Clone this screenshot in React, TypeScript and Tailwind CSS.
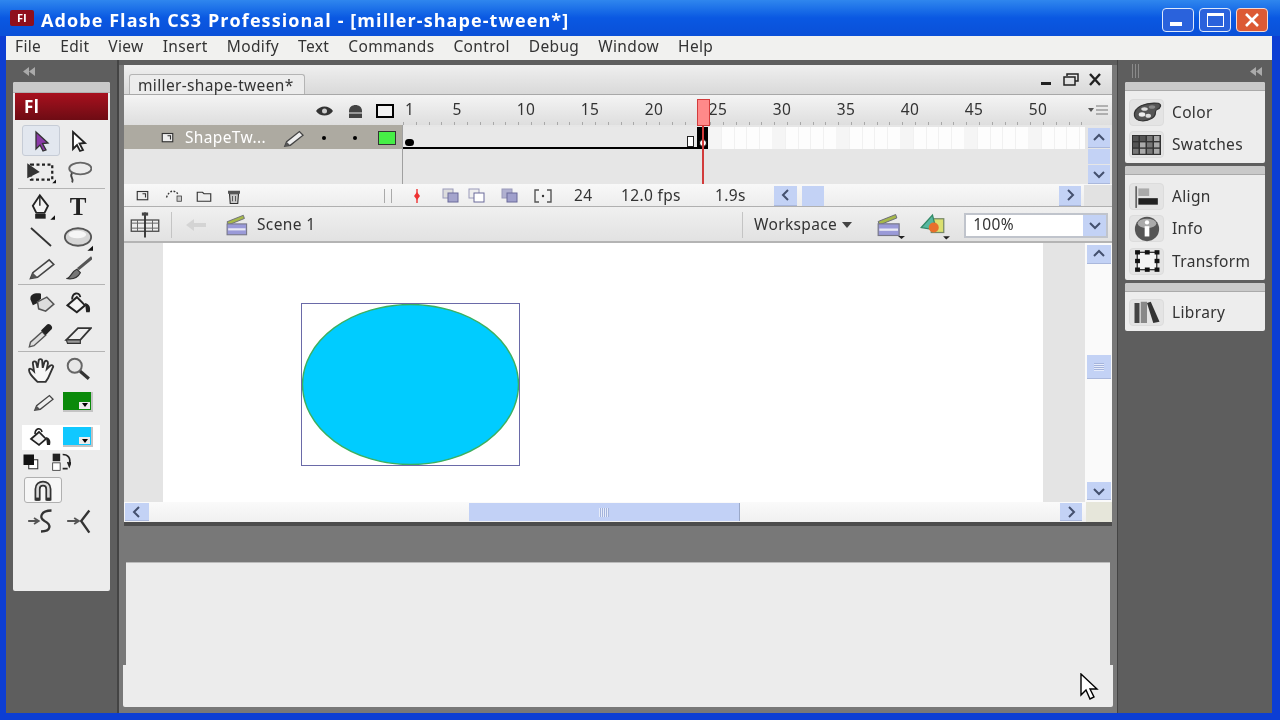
import type { ReactNode } from 'react';

const menus = ['File', 'Edit', 'View', 'Insert', 'Modify', 'Text', 'Commands', 'Control', 'Debug', 'Window', 'Help'];
const frameLabels = ['10', '15', '20', '25', '30', '35', '40', '45', '50'];

function Ico({ size = 24, children, className = '' }: { size?: number; children: ReactNode; className?: string }) {
  return (
    <svg width={size} height={size} viewBox="0 0 24 24" className={className}>
      {children}
    </svg>
  );
}

const ArrowTool = () => (
  <Ico><path d="M7 3 L19 14 L13.5 14.5 L17 21 L14 22 L11 16 L7 20 Z" fill="#8a3aa8" stroke="#333" strokeWidth="1.3" /></Ico>
);
const SubTool = () => (
  <Ico><path d="M7 3 L19 14 L13.5 14.5 L17 21 L14 22 L11 16 L7 20 Z" fill="#fff" stroke="#222" strokeWidth="1.8" /></Ico>
);
const FreeTransform = () => (
  <Ico size={30}>
    <rect x="4" y="6" width="17" height="12" fill="none" stroke="#222" strokeWidth="1.8" strokeDasharray="2.4 2" />
    <path d="M1 5 L11 12 L1 17 Z" fill="#333" />
    <path d="M21 21 L24 21 L24 18 Z" fill="#111" />
  </Ico>
);
const Lasso = () => (
  <Ico size={28}>
    <ellipse cx="14" cy="9" rx="9.5" ry="5" fill="none" stroke="#666" strokeWidth="1.6" />
    <path d="M7 13 C4 16 9 17 7 21" fill="none" stroke="#444" strokeWidth="1.6" />
  </Ico>
);
const PenTool = () => (
  <Ico size={28}>
    <path d="M11 2 L18 11 L15 17 L8 17 L5 11 Z" fill="#f4f4f4" stroke="#222" strokeWidth="1.6" />
    <path d="M11 3 V11" stroke="#222" strokeWidth="1.2" />
    <rect x="7" y="18" width="9" height="4" fill="#222" />
    <path d="M20 23 L24 23 L24 19 Z" fill="#111" />
  </Ico>
);
const LineTool = () => (
  <Ico><path d="M2 3 L22 21" stroke="#333" strokeWidth="1.8" /></Ico>
);
const OvalTool = () => (
  <Ico size={30}>
    <ellipse cx="12" cy="12" rx="10.5" ry="7" fill="#d6d6d6" stroke="#555" strokeWidth="1.5" />
    <ellipse cx="11.5" cy="10" rx="7" ry="3" fill="#f6f6f6" />
    <path d="M19.5 23 L24 23 L24 19 Z" fill="#111" />
  </Ico>
);
const Pencil = ({ size = 28 }: { size?: number }) => (
  <Ico size={size}>
    <path d="M3 21 L5 16 L19 5 L23 9 L9 20 Z" fill="#eee" stroke="#444" strokeWidth="1.4" />
    <path d="M3 21 L5 16 L9 20 Z" fill="#555" />
  </Ico>
);
const Brush = () => (
  <Ico size={28}>
    <path d="M12 13 L24 3" stroke="#555" strokeWidth="2.6" />
    <path d="M2 21 C6 21 6 15 11 13 L14 16 C12 20 8 22 2 21 Z" fill="#777" stroke="#333" strokeWidth="1" />
  </Ico>
);
const InkBottle = () => (
  <Ico size={28}>
    <path d="M3 9 C2 4 8 3 12 4 L12 8 L9 12 L5 14 Z" fill="#222" />
    <path d="M9 11 L17 7 L23 13 L16 19 L10 17 Z" fill="#ddd" stroke="#555" strokeWidth="1.3" />
  </Ico>
);
const PaintBucket = ({ size = 28 }: { size?: number }) => (
  <Ico size={size}>
    <path d="M3 14 L11 7 L18 14 L11 20 Z" fill="#f4f4f4" stroke="#222" strokeWidth="1.7" />
    <path d="M7 9 C7 3 13 2 14 7" fill="none" stroke="#222" strokeWidth="1.6" />
    <path d="M18 12 C22 13 23 16 22 20 L19 20 Z" fill="#222" />
  </Ico>
);
const Eyedropper = () => (
  <Ico size={28}>
    <path d="M2 23 L3 19 L13 10 L16 13 L6 22 Z" fill="#ddd" stroke="#555" strokeWidth="1.2" />
    <path d="M12 9 L17 4 C19 2 23 6 21 8 L16 13 Z" fill="#222" />
  </Ico>
);
const Eraser = () => (
  <Ico size={28}>
    <path d="M2 17 L12 7 L23 7 L14 17 Z" fill="#eee" stroke="#333" strokeWidth="1.5" />
    <path d="M2 17 L14 17 L14 20 L3 20 Z" fill="#999" stroke="#333" strokeWidth="1" />
  </Ico>
);
const Hand = () => (
  <Ico size={28}>
    <path d="M7 21 C4 18 1 14 2 12 C3 11 5 13 6 14 L5 7 C5 5 8 5 8 7 L9 11 L10 5 C10 3 13 3 13 5 L13.5 11 L15 6 C16 4 18 5 18 7 L17 12 L20 9 C22 8 23 10 22 11 L18 20 L16 23 L9 23 Z" fill="#f6f6f6" stroke="#333" strokeWidth="1.6" />
  </Ico>
);
const Zoom = () => (
  <Ico size={26}>
    <circle cx="9" cy="9" r="6.5" fill="#e8e8e8" stroke="#666" strokeWidth="1.8" />
    <path d="M14 14 L22 21" stroke="#333" strokeWidth="3" />
  </Ico>
);
const DefaultColors = () => (
  <Ico size={18}>
    <rect x="9" y="9" width="12" height="12" fill="#fff" stroke="#333" strokeWidth="1.4" />
    <rect x="2" y="2" width="14" height="14" fill="#111" />
  </Ico>
);
const SwapColors = () => (
  <Ico size={20}>
    <rect x="2" y="2" width="9" height="9" fill="#222" />
    <rect x="2" y="13" width="9" height="9" fill="#fff" stroke="#333" />
    <path d="M14 3 C21 3 24 8 22 15 M20 12 L22 17 L24 12 M14 20 L20 20" fill="none" stroke="#222" strokeWidth="2" />
  </Ico>
);
const Magnet = () => (
  <Ico size={26}>
    <path d="M5 21 V11 C5 2 19 2 19 11 V21 H15 V11 C15 7 9 7 9 11 V21 Z" fill="#ddd" stroke="#333" strokeWidth="1.6" />
    <rect x="5" y="19" width="4" height="3" fill="#333" />
    <rect x="15" y="19" width="4" height="3" fill="#333" />
  </Ico>
);
const Smooth = () => (
  <Ico size={28}>
    <path d="M1 12 H9 M6 9.5 L10 12 L6 14.5" fill="none" stroke="#555" strokeWidth="1.6" />
    <path d="M21 3 C12 3 10 9 15 12 C21 15 21 21 12 21" fill="none" stroke="#333" strokeWidth="2" />
  </Ico>
);
const Straighten = () => (
  <Ico size={28}>
    <path d="M1 12 H10 M7 9.5 L11 12 L7 14.5" fill="none" stroke="#555" strokeWidth="1.6" />
    <path d="M20 3 L13 12 L20 22" fill="none" stroke="#333" strokeWidth="2" />
  </Ico>
);

const Clapper = ({ size = 26, drop }: { size?: number; drop?: boolean }) => (
  <Ico size={size}>
    <path d="M1 9 L16 3 L17 6 L2 12 Z" fill="#a6b84a" stroke="#667" strokeWidth="0.8" />
    <rect x="1" y="11" width="18" height="10" fill="#9a9ad8" stroke="#778" />
    <rect x="2" y="15" width="16" height="2" fill="#e8e8f4" />
    {drop && <path d="M18 21.5 H24 L21 24 Z" fill="#222" />}
  </Ico>
);
const EditScene = () => (
  <Ico size={30}>
    <rect x="1" y="8" width="22" height="9" fill="#eee" stroke="#444" strokeWidth="1" />
    <path d="M1 10.5 H23 M1 14.5 H23 M6 8 V17 M18 8 V17" stroke="#666" strokeWidth="0.8" />
    <path d="M12 2 V22" stroke="#333" strokeWidth="1.5" />
    <rect x="9.5" y="2" width="5" height="2.5" fill="#444" />
  </Ico>
);
const Shapes = () => (
  <Ico size={30}>
    <rect x="9" y="7" width="10" height="11" fill="#dbe070" stroke="#786" />
    <path d="M1 14 L10 4 L13 16 Z" fill="#55b8a0" stroke="#386" />
    <circle cx="11" cy="14" r="4" fill="#e8702c" />
    <path d="M18.5 21 H24 L21 23.5 Z" fill="#222" />
  </Ico>
);
const Palette = () => (
  <Ico size={30}>
    <path d="M2 15 C1 8 11 4 21 5 C24 6 23 9 20 10 C17 11 21 14 16 17 C11 20 3 20 2 15 Z" fill="#555" stroke="#333" />
    <ellipse cx="8" cy="14" rx="2.6" ry="1.8" fill="#eee" />
    <ellipse cx="13" cy="15" rx="2.2" ry="1.6" fill="#ddd" />
    <ellipse cx="10" cy="9.5" rx="2.6" ry="1.4" fill="#ddd" />
    <ellipse cx="16" cy="8" rx="2.6" ry="1.4" fill="#888" />
  </Ico>
);
const SwatchGrid = () => (
  <svg width="29" height="20" viewBox="0 0 29 20">
    <rect width="29" height="20" fill="#333" />
    {[0, 1, 2, 3].map((c) =>
      [0, 1, 2].map((r) => (
        <rect key={`${c}-${r}`} x={1 + c * 7} y={1 + r * 6.4} width="5.5" height="5" fill={c + r < 2 ? '#555' : c % 2 ? '#aaa' : '#777'} />
      )),
    )}
  </svg>
);
const AlignIco = () => (
  <Ico size={26}>
    <path d="M2 3 V23" stroke="#666" strokeWidth="1.6" />
    <rect x="4" y="5" width="10" height="7" fill="#aaa" />
    <rect x="4" y="14" width="18" height="6" fill="#222" />
  </Ico>
);
const InfoIco = () => (
  <svg width="28" height="28" viewBox="0 0 30 30">
    <circle cx="15" cy="15" r="13" fill="#555" />
    <ellipse cx="15" cy="9" rx="10" ry="5" fill="#aaa" />
    <circle cx="15" cy="8" r="2.3" fill="#fff" />
    <rect x="12.5" y="12" width="5" height="11" fill="#fff" />
  </svg>
);
const TransformIco = () => (
  <Ico size={26}>
    <rect x="3" y="4" width="18" height="16" fill="#f4f4f4" stroke="#333" strokeWidth="1.2" />
    {[[1, 2], [10, 2], [19, 2], [1, 10], [19, 10], [1, 18], [10, 18], [19, 18]].map(([x, y]) => (
      <rect key={`${x}-${y}`} x={x} y={y} width="4.5" height="4" fill="#111" />
    ))}
  </Ico>
);
const LibraryIco = () => (
  <Ico size={30}>
    <rect x="2" y="4" width="4" height="16" fill="#444" />
    <rect x="7" y="3" width="5" height="17" fill="#888" />
    <path d="M12 4 L15 3 L22 19 L17 20 Z" fill="#333" />
  </Ico>
);

function ScrollBtn({ dir, className = '' }: { dir: 'up' | 'down' | 'left' | 'right'; className?: string }) {
  const d = { up: 'M3 10 L8 5 L13 10', down: 'M3 6 L8 11 L13 6', left: 'M10 3 L5 8 L10 13', right: 'M6 3 L11 8 L6 13' }[dir];
  return (
    <div className={`flex items-center justify-center bg-[#c3d2f5] border-b border-[#aab8dc] ${className}`}>
      <svg width="16" height="16" viewBox="0 0 16 16">
        <path d={d} fill="none" stroke="#44506e" strokeWidth="2" />
      </svg>
    </div>
  );
}

function Tool({ children, active }: { children: ReactNode; active?: boolean }) {
  return (
    <div className={`flex items-center justify-center h-[31px] ${active ? 'bg-[#e2e7ef] border border-[#c6ccd6] rounded-[3px]' : ''}`}>
      {children}
    </div>
  );
}

function ToolSep() {
  return <div className="h-px bg-[#b4b4b4] mx-[5px] my-[1px]" />;
}

function Swatch({ color }: { color: string }) {
  return (
    <div className="relative w-[30px] h-[20px] border-r-2 border-b-2 border-[#c4c4c4]">
      <div className="w-full h-full" style={{ background: color }} />
      <div className="absolute right-[1px] bottom-[1px] w-[11px] h-[7px] bg-[#ececec] flex items-center justify-center">
        <div className="w-0 h-0 border-x-[3px] border-x-transparent border-t-[4px] border-t-black" />
      </div>
    </div>
  );
}

function PanelGroup({ items }: { items: { icon: ReactNode; label: string }[] }) {
  return (
    <div className="mx-[7px] bg-[#ededed] rounded-[2px] mb-[3px]">
      <div className="h-[9px] bg-[#c9c9c9] border-b border-[#aaa] rounded-t-[2px]" />
      <div className="flex flex-col pt-[5px] pb-[2px] px-[4px]">
        {items.map((it) => (
          <div key={it.label} className="flex items-center h-[32.5px]">
            <div className="w-[35px] h-[27px] flex items-center justify-center bg-[#e4e4e4] rounded-[4px] border border-[#dcdcdc]">{it.icon}</div>
            <span className="ml-[8px] text-[#333]">{it.label}</span>
          </div>
        ))}
      </div>
    </div>
  );
}

function Collapse({ className = '' }: { className?: string }) {
  return (
    <svg width="14" height="9" viewBox="0 0 14 9" className={className}>
      <path d="M7 0 V9 L1 4.5 Z M13 0 V9 L7 4.5 Z" fill="#aaa" />
    </svg>
  );
}

function SmallLayerIco({ kind }: { kind: number }) {
  return (
    <Ico size={18}>
      {kind === 0 && (
        <>
          <rect x="3" y="6" width="14" height="11" fill="#eee" stroke="#333" strokeWidth="1.5" />
          <path d="M10 9 H14 V14" fill="none" stroke="#333" strokeWidth="1.5" />
        </>
      )}
      {kind === 1 && (
        <>
          <path d="M2 14 C5 5 12 3 17 9" fill="none" stroke="#333" strokeWidth="1.8" strokeDasharray="2.5 2" />
          <rect x="16" y="12" width="6" height="7" fill="#ccc" stroke="#333" />
        </>
      )}
      {kind === 2 && <path d="M3 7 H10 L12 9 H21 V19 H3 Z" fill="#eee" stroke="#333" strokeWidth="1.5" />}
      {kind === 3 && (
        <>
          <path d="M6 9 H18 L17 22 H7 Z" fill="#ccc" stroke="#333" strokeWidth="1.5" />
          <rect x="4" y="5" width="16" height="4" fill="#555" />
          <path d="M10 12 V19 M14 12 V19" stroke="#333" />
        </>
      )}
    </Ico>
  );
}

function Onion({ a, b }: { a: string; b: string }) {
  return (
    <svg width="18" height="16" viewBox="0 0 18 16">
      <rect x="1" y="1" width="10" height="9" fill={a} stroke="#9a9aba" />
      <rect x="6" y="5" width="10" height="9" fill={b} stroke="#6a6a9a" />
    </svg>
  );
}

export default function App() {
  return (
    <div className="relative w-[1280px] h-[720px] overflow-hidden flex flex-col bg-[#0c3ed4] font-['Noto_Sans',sans-serif] text-[15.5px] tracking-[0.35px] blur-[0.5px]">
      {/* title bar */}
      <div className="h-9 shrink-0 flex items-center pt-[4px] pl-[10px] pr-[12px] bg-gradient-to-b from-[#2f86ee] via-[#0a58e2] to-[#0a50d8]">
        <div className="w-[24px] h-[16px] mb-[5px] bg-[#8f0f1c] rounded-[2px] text-white text-[11px] font-bold flex items-center justify-center leading-none">Fl</div>
        <span className="ml-[7px] mt-[1px] text-white font-bold text-[18px] tracking-[1.08px] font-['Open_Sans',sans-serif] whitespace-nowrap">Adobe Flash CS3 Professional - [miller-shape-tween*]</span>
        <div className="ml-auto flex gap-[5px]">
          <div className="w-[32px] h-[24px] rounded-[4px] border border-[#dfe9fb] bg-[#2a62dc] flex items-end pl-[7px] pb-[5px]">
            <div className="w-[12px] h-[4px] bg-white" />
          </div>
          <div className="w-[32px] h-[24px] rounded-[4px] border border-[#dfe9fb] bg-[#2a62dc] flex items-center justify-center">
            <div className="w-[17px] h-[14px] border border-white border-t-[3px]" />
          </div>
          <div className="w-[32px] h-[24px] rounded-[4px] border border-[#f4d8d0] bg-[#dc5a34] flex items-center justify-center">
            <svg width="16" height="14" viewBox="0 0 16 14">
              <path d="M2 1 L14 13 M14 1 L2 13" stroke="#fff" strokeWidth="2.6" />
            </svg>
          </div>
        </div>
      </div>

      {/* menu */}
      <div className="h-6 shrink-0 ml-[6px] mr-[8px] bg-[#f1f1ef] flex items-center pb-[3px] pl-[9px] gap-[19px] text-[#333]">
        {menus.map((m) => (
          <span key={m}>{m}</span>
        ))}
      </div>

      <div className="flex-1 flex ml-[6px] mr-[8px] bg-[#5e5e5e] min-h-0">
        {/* tools */}
        <div className="w-[111px] shrink-0 pl-[7px]">
          <div className="h-[22px] flex items-center pl-[9px]">
            <Collapse />
          </div>
          <div className="w-[97px] h-[509px] bg-[#ececec] rounded-[2px]">
            <div className="h-[11px] bg-[#c9c9c9] border-b border-[#b0b0b0] rounded-t-[2px]" />
            <div className="mx-[2px] h-[27px] bg-gradient-to-b from-[#a8101e] to-[#6e0c14] text-white font-bold text-[17px] pl-[9px] flex items-center">Fl</div>
            <div className="grid grid-cols-2 pl-[9px] pr-[11px] pt-[5px] w-[95px]">
              <Tool active><ArrowTool /></Tool>
              <Tool><SubTool /></Tool>
              <Tool><FreeTransform /></Tool>
              <Tool><Lasso /></Tool>
            </div>
            <ToolSep />
            <div className="grid grid-cols-2 pl-[9px] pr-[11px] pt-[1px] w-[95px] auto-rows-[30.5px]">
              <Tool><PenTool /></Tool>
              <Tool><span className="font-['Liberation_Serif',serif] font-bold text-[25px] text-[#222]">T</span></Tool>
              <Tool><LineTool /></Tool>
              <Tool><OvalTool /></Tool>
              <Tool><Pencil /></Tool>
              <Tool><Brush /></Tool>
            </div>
            <ToolSep />
            <div className="grid grid-cols-2 pl-[9px] pr-[11px] pt-[2px] w-[95px]">
              <Tool><InkBottle /></Tool>
              <Tool><PaintBucket /></Tool>
              <Tool><Eyedropper /></Tool>
              <Tool><Eraser /></Tool>
            </div>
            <ToolSep />
            <div className="grid grid-cols-2 pl-[9px] pr-[11px] pt-[1px] w-[95px]">
              <Tool><Hand /></Tool>
              <Tool><Zoom /></Tool>
            </div>
            <div className="flex items-center h-[34px] pl-[19px] gap-[9px]">
              <Pencil size={22} />
              <Swatch color="#0a8a0a" />
            </div>
            <div className="flex items-center h-[25px] mt-[6px] ml-[9px] w-[78px] bg-white pl-[6px] gap-[11px]">
              <PaintBucket size={24} />
              <Swatch color="#10c8ff" />
            </div>
            <div className="flex items-center h-[25px] pl-[9px] gap-[11px]">
              <DefaultColors />
              <SwapColors />
            </div>
            <div className="ml-[11px] mt-[2px] w-[38px] h-[26px] border border-[#b0b0b0] bg-[#f6f6f6] rounded-[3px] flex items-center justify-center">
              <Magnet />
            </div>
            <div className="flex items-center h-[32px] mt-[2px] pl-[14px] gap-[11px]">
              <Smooth />
              <Straighten />
            </div>
          </div>
        </div>

        {/* center */}
        <div className="w-[1001px] shrink-0 flex flex-col border-l-2 border-r border-[#444] bg-[#787878]">
          <div className="h-[5px] shrink-0 bg-[#5e5e5e]" />
          <div className="h-[457px] shrink-0 mx-[5px] bg-[#e6e6e6] flex flex-col relative rounded-t-[3px]">
            {/* tab row */}
            <div className="h-[30px] shrink-0 bg-gradient-to-b from-[#efefef] to-[#d9d9d9] border-b border-[#a8a8a8] flex items-end pl-[5px] pr-[10px]">
              <div className="w-[176px] h-[20px] bg-[#ececec] border border-b-0 border-[#b4b4b4] rounded-t-[3px] leading-[20px] text-[#333] pl-[8px]">miller-shape-tween*</div>
              <div className="ml-auto h-full flex items-center gap-[9px] text-[#222]">
                <div className="w-[10px] h-[3px] bg-[#222] mt-[8px]" />
                <svg width="16" height="13" viewBox="0 0 16 13" className="ml-[3px]"><path d="M4 3 V1 H15 V8 H12 M1 4 H12 V12 H1 Z" fill="none" stroke="#222" strokeWidth="1.5" /></svg>
                <svg width="14" height="13" viewBox="0 0 14 13"><path d="M2 1 L12 12 M12 1 L2 12" stroke="#222" strokeWidth="2.4" /></svg>
              </div>
            </div>
            {/* timeline */}
            <div className="flex h-[30px] shrink-0 bg-gradient-to-b from-[#f4f4f4] to-[#dedede]">
              <div className="w-[278px] shrink-0 flex items-center justify-end pt-[1px] pr-[8px] gap-[13px]">
                <svg width="19" height="12" viewBox="0 0 19 12" className="mr-[1px]"><path d="M1 6 C5 0 14 0 18 6 C14 12 5 12 1 6 Z" fill="#333" /><circle cx="9.5" cy="6" r="2.5" fill="#ccc" /></svg>
                <svg width="15" height="14" viewBox="0 0 15 14"><path d="M1 14 V7 C1 -1 14 -1 14 7 V14 Z" fill="#444" /><rect x="1" y="8" width="13" height="2" fill="#999" /></svg>
                <div className="w-[18px] h-[14px] border-2 border-black bg-[#f2f2f2]" />
              </div>
              <div className="flex-1 flex flex-col min-w-0">
                <div className="flex-1 flex text-[#333] items-center pt-[3px]">
                  <span className="w-[15px] text-center">1</span>
                  <span className="w-[64px] text-center ml-[8px]">5</span>
                  <div className="w-[5px] shrink-0" />
                  {frameLabels.map((l) => (
                    <span key={l} className="w-[64px] shrink-0 text-center">{l}</span>
                  ))}
                  <svg width="22" height="12" viewBox="0 0 22 12" className="ml-auto mr-[3px]"><path d="M1 4 H7 L4 8 Z" fill="#555" /><path d="M9 2 H21 M9 6 H21 M9 10 H21" stroke="#777" /></svg>
                </div>
                <div className="h-[3px] w-[683px] ml-[1px] bg-[repeating-linear-gradient(90deg,#a8a8a8_0,#a8a8a8_1px,transparent_1px,transparent_12.8px)]" />
              </div>
            </div>
            <div className="flex h-[59px] shrink-0">
              <div className="w-[279px] shrink-0 border-r border-[#a0a0a0]">
                <div className="h-[24px] pt-[2px] bg-[#adaaa1] flex items-center pl-[36px]">
                  <SmallLayerIco kind={0} />
                  <span className="ml-[7px] text-white w-[97px] whitespace-nowrap">ShapeTw...</span>
                  <Pencil size={22} />
                  <div className="w-[4px] h-[4px] rounded-full bg-black ml-[18px]" />
                  <div className="w-[4px] h-[4px] rounded-full bg-black ml-[27px]" />
                  <div className="w-[18px] h-[14px] bg-[#46ee46] border border-[#333] ml-[21px]" />
                </div>
              </div>
              <div className="w-[682px] shrink-0">
                <div className="h-[24px] pt-[2px] flex">
                  <div className="w-[294px] bg-[#e8e8e8] border-b-2 border-black flex items-end justify-between pl-[2px] pr-[3px]">
                    <div className="w-[9px] h-[7px] rounded-full bg-black mb-[1px]" />
                    <div className="w-[7px] h-[11px] border border-[#222] bg-white" />
                  </div>
                  <div className="w-[11px] bg-black flex items-end justify-center pb-[2px]">
                    <div className="w-[8px] h-[8px] rounded-full bg-white border border-black" />
                  </div>
                  <div className="flex-1 bg-[repeating-linear-gradient(90deg,#f5f5f5_0,#f5f5f5_12.8px,transparent_12.8px,transparent_64px),repeating-linear-gradient(90deg,#f1f1f1_0,#f1f1f1_1px,#fdfdfd_1px,#fdfdfd_12.8px)]" />
                </div>
              </div>
              <div className="flex-1 flex flex-col pt-[3px] items-center">
                <ScrollBtn dir="up" className="w-[22px] h-[20px]" />
                <div className="w-[22px] h-[15px] mt-[1px] bg-[#c3d2f5]" />
                <ScrollBtn dir="down" className="w-[22px] h-[19px] mt-[1px]" />
              </div>
            </div>
            <div className="h-[23px] shrink-0 pt-[1px] bg-gradient-to-b from-[#f8f8f8] to-[#ededed] border-b border-[#b0b0b0] flex items-center text-[#333]">
              <div className="w-[278px] shrink-0 flex items-center pl-[11px] gap-[12px]">
                <SmallLayerIco kind={0} />
                <SmallLayerIco kind={1} />
                <SmallLayerIco kind={2} />
                <SmallLayerIco kind={3} />
                <div className="ml-auto mr-[10px] w-[8px] h-[14px] border-x border-[#aaa]" />
              </div>
              <svg width="10" height="16" viewBox="0 0 10 16" className="ml-[10px]"><path d="M5 1 V15" stroke="#e33" strokeWidth="1.4" /><path d="M5 4 L8 8 L5 12 L2 8 Z" fill="#e33" /></svg>
              <div className="ml-[20px] flex gap-[8px]">
                <Onion a="#ddd" b="#a4a4cc" />
                <Onion a="#eee" b="#fff" />
              </div>
              <div className="ml-[15px]"><Onion a="#b0b0d0" b="#a0a0cc" /></div>
              <svg width="18" height="14" viewBox="0 0 18 14" className="ml-[15px]"><path d="M5 1 H1 V13 H5 M13 1 H17 V13 H13" fill="none" stroke="#555" strokeWidth="1.4" /><circle cx="9" cy="7" r="1.2" fill="#333" /></svg>
              <span className="ml-[22px] w-[18px]">24</span>
              <span className="ml-[29px] w-[64px] whitespace-nowrap">12.0 fps</span>
              <span className="ml-[30px] w-[33px]">1.9s</span>
              <ScrollBtn dir="left" className="ml-[26px] w-[23px] h-[20px]" />
              <div className="ml-[5px] w-[22px] h-[20px] bg-[#c3d2f5]" />
              <ScrollBtn dir="right" className="ml-[235px] w-[22px] h-[20px]" />
              <div className="ml-[3px] flex-1 h-full bg-[#e2e2e2]" />
            </div>
            {/* edit bar */}
            <div className="h-[36px] shrink-0 pt-[2px] bg-gradient-to-b from-[#f0f0f0] to-[#e2e2e2] border-b-2 border-[#b4b4b4] flex items-center text-[#333]">
              <div className="ml-[6px]"><EditScene /></div>
              <div className="ml-[11px] w-px h-[26px] bg-[#c4c4c4]" />
              <svg width="22" height="14" viewBox="0 0 22 14" className="ml-[13px]"><path d="M1 7 L9 1 V5 H21 V9 H9 V13 Z" fill="#d4d4d4" /></svg>
              <div className="ml-[19px]"><Clapper /></div>
              <span className="ml-[5px] w-[70px] whitespace-nowrap">Scene 1</span>
              <div className="ml-[415px] w-px h-[26px] bg-[#c4c4c4]" />
              <span className="ml-[11px]">Workspace</span>
              <div className="ml-[5px] w-0 h-0 border-x-[5px] border-x-transparent border-t-[6px] border-t-[#444]" />
              <div className="ml-[25px]"><Clapper size={28} drop /></div>
              <div className="ml-[15px]"><Shapes /></div>
              <div className="ml-[14px] w-[144px] h-[25px] bg-white border-2 border-[#c0c4cc] flex items-center pl-[7px]">
                100%
                <ScrollBtn dir="down" className="ml-auto w-[23px] h-full border-b-0" />
              </div>
            </div>
            {/* stage */}
            <div className="flex-1 flex min-h-0">
              <div className="flex-1 flex flex-col min-w-0">
                <div className="flex-1 bg-[#e4e4e4] px-[39px] flex">
                  <div className="w-[880px] h-full bg-white pl-[138px] pt-[60px]">
                    <div className="w-[219px] h-[163px] border border-[#6a6aa8]">
                      <svg width="217" height="161" viewBox="0 0 217 161">
                        <ellipse cx="108.5" cy="80.5" rx="108" ry="80" fill="#00ccff" stroke="#3cb060" strokeWidth="1.4" />
                      </svg>
                    </div>
                  </div>
                </div>
              </div>
              <div className="w-[27px] shrink-0 bg-[#fafafa] flex flex-col items-center pt-[2px] pb-[2px]">
                <ScrollBtn dir="up" className="w-[24px] h-[19px]" />
                <div className="mt-[91px] w-[24px] h-[24px] bg-[#c3d2f5] border-b border-[#aab8dc] flex items-center justify-center">
                  <div className="w-[10px] h-[8px] bg-[repeating-linear-gradient(0deg,#e6ecfa_0,#e6ecfa_1px,#a4b4dc_1px,#a4b4dc_2px)]" />
                </div>
                <ScrollBtn dir="down" className="mt-auto w-[24px] h-[18px]" />
              </div>
            </div>
            <div className="h-[20px] shrink-0 bg-gradient-to-b from-[#fafafa] to-[#f0f0f0] flex items-center pl-[1px]">
              <ScrollBtn dir="left" className="w-[24px] h-[18px]" />
              <div className="ml-[320px] w-[271px] h-[18px] bg-[#c2d1f6] border-r border-[#9aa8c8] flex items-center justify-center">
                <div className="w-[10px] h-[9px] bg-[repeating-linear-gradient(90deg,#e6ecfa_0,#e6ecfa_1px,#a4b4dc_1px,#a4b4dc_2px)]" />
              </div>
              <ScrollBtn dir="right" className="ml-[320px] w-[22px] h-[18px]" />
              <div className="ml-[4px] flex-1 h-full bg-[#e6e6da]" />
            </div>
            {/* playhead */}
            <div className="absolute left-[573px] top-[34px] w-[13px] h-[27px] bg-[#ff8a8a] border border-[#d23c3c]" />
            <div className="absolute left-[578px] top-[61px] w-[2px] h-[58px] bg-[#d23c3c]" />
          </div>
          <div className="h-[4px] shrink-0 bg-[#4c4c4c] mx-[5px]" />
          <div className="h-[36px] shrink-0" />
          <div className="h-[103px] shrink-0 mx-[7px] bg-[#ececec] border-t border-[#bbb]" />
          <div className="h-[42px] shrink-0 mx-[4px] bg-[#ececec] rounded-b-[2px]" />
        </div>

        {/* panels */}
        <div className="flex-1 min-w-0">
          <div className="h-[22px] flex items-center pl-[14px] pr-[9px]">
            <div className="w-[9px] h-[14px] bg-[repeating-linear-gradient(90deg,#8a8a8a_0,#8a8a8a_1px,#5e5e5e_1px,#5e5e5e_3px)]" />
            <Collapse className="ml-auto" />
          </div>
          <PanelGroup items={[{ icon: <Palette />, label: 'Color' }, { icon: <SwatchGrid />, label: 'Swatches' }]} />
          <PanelGroup items={[{ icon: <AlignIco />, label: 'Align' }, { icon: <InfoIco />, label: 'Info' }, { icon: <TransformIco />, label: 'Transform' }]} />
          <PanelGroup items={[{ icon: <LibraryIco />, label: 'Library' }]} />
        </div>
      </div>
      <div className="h-[7px] shrink-0" />

      {/* mouse cursor */}
      <svg width="22" height="28" viewBox="0 0 22 28" className="absolute left-[1079px] top-[673px]">
        <path d="M2 1 L2 22 L7 17 L11 26 L15 24 L11 16 L18 16 Z" fill="#fff" stroke="#000" strokeWidth="1.4" />
      </svg>
    </div>
  );
}
